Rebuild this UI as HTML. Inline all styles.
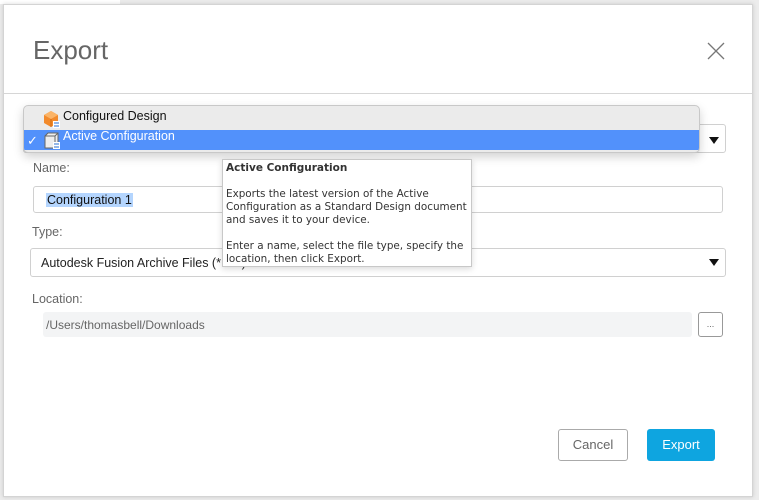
<!DOCTYPE html>
<html><head><meta charset="utf-8"><style>
*{box-sizing:border-box;margin:0;padding:0}
body{width:759px;height:500px;background:#ececec;font-family:"Liberation Sans",sans-serif;position:relative;overflow:hidden}
.dlg{position:absolute;left:3px;top:4px;width:750px;height:493px;background:#fff;border:1px solid #d4d4d4;box-shadow:0 0 4px rgba(0,0,0,.15)}
.abs{position:absolute}
.lbl{position:absolute;font-size:12.5px;color:#666}
.box{position:absolute;border:1px solid #d0d0d0;border-radius:3px;background:#fff}
.arrow{position:absolute;width:0;height:0;border-left:5px solid transparent;border-right:5px solid transparent;border-top:7px solid #111}
</style></head><body>
<div class="abs" style="left:0;top:0;width:120px;height:4px;background:#fff"></div>
<div class="dlg"></div>
<div class="abs" style="left:33px;top:35px;font-size:26px;color:#666">Export</div>
<svg class="abs" style="left:707px;top:42px" width="18" height="18"><path d="M1 1L17 17M17 1L1 17" stroke="#777" stroke-width="1.3"/></svg>
<div class="abs" style="left:4px;top:93px;width:748px;height:1px;background:#d6d6d6"></div>

<div class="box" style="left:23px;top:124px;width:703px;height:29px"></div>
<div class="arrow" style="left:709px;top:137px"></div>

<div class="lbl" style="left:33px;top:161px">Name:</div>
<div class="box" style="left:33px;top:186px;width:690px;height:27px"></div>
<div class="abs" style="left:46px;top:193px;font-size:12.5px;background:#b4d5fe;color:#111;padding:0 1px">Configuration 1</div>

<div class="lbl" style="left:32px;top:225px">Type:</div>
<div class="box" style="left:30px;top:248px;width:696px;height:29px"></div>
<div class="abs" style="left:41px;top:256px;font-size:12.5px;color:#222">Autodesk Fusion Archive Files (*.f3d)</div>
<div class="arrow" style="left:709px;top:259px"></div>

<div class="lbl" style="left:32px;top:292px">Location:</div>
<div class="abs" style="left:43px;top:312px;width:649px;height:25px;background:#f3f4f5;border-radius:3px"></div>
<div class="abs" style="left:46px;top:318px;font-size:12px;color:#666">/Users/thomasbell/Downloads</div>
<div class="box" style="left:698px;top:312px;width:25px;height:25px;border-color:#999;font-size:9px;color:#666;text-align:center;line-height:22px">...</div>

<div class="box" style="left:558px;top:429px;width:70px;height:32px;border-color:#aaa;font-size:13px;color:#666;text-align:center;line-height:30px">Cancel</div>
<div class="abs" style="left:647px;top:429px;width:68px;height:32px;background:#0ea5e0;border-radius:3px;font-size:13px;color:#fff;text-align:center;line-height:32px">Export</div>

<div class="abs" style="left:23px;top:105px;width:677px;height:48px;background:#ebebeb;border:1px solid #c8c8c8;border-radius:5px;box-shadow:0 4px 10px rgba(0,0,0,.18);overflow:hidden">
 <div class="abs" style="left:0;top:24px;width:677px;height:20px;background:#5291fb"></div>
 <svg class="abs" style="left:19px;top:4px" width="18" height="19"><path d="M1 5L8 1L15 5L15 13L8 17L1 13Z" fill="#f28a2c"/><path d="M1 5L8 9L15 5L8 1Z" fill="#fbb467"/><path d="M8 9L8 17" stroke="#d06a10"/><rect x="10" y="11" width="7" height="7" fill="#fff"/><path d="M11 13h5M11 16h5" stroke="#2a6fd0"/></svg>
 <div class="abs" style="left:39px;top:3px;font-size:12.5px;color:#111">Configured Design</div>
 <div class="abs" style="left:3px;top:27px;font-size:13px;color:#fff">✓</div>
 <svg class="abs" style="left:19px;top:25px" width="18" height="19"><path d="M2 5L5 2L15 2L15 14L12 17L2 17Z" fill="#eee" stroke="#666"/><path d="M2 5L12 5L15 2M12 5L12 17" stroke="#666" fill="none"/><rect x="10" y="11" width="7" height="7" fill="#fff"/><path d="M11 13h5M11 16h5" stroke="#2a6fd0"/></svg>
 <div class="abs" style="left:39px;top:23px;font-size:12.5px;color:#fff">Active Configuration</div>
</div>

<div class="abs" style="left:222px;top:159px;width:250px;height:108px;background:#fff;border:1px solid #c8c8c8;box-shadow:0 2px 6px rgba(0,0,0,.15);font-family:'DejaVu Sans',sans-serif;font-size:10.4px;color:#333;padding:2px 0 0 3px;line-height:13px;white-space:nowrap">
 <div style="font-weight:bold;font-size:10.5px">Active Configuration</div>
 <div style="margin-top:13px">Exports the latest version of the Active<br>Configuration as a Standard Design document<br>and saves it to your device.</div>
 <div style="margin-top:13px">Enter a name, select the file type, specify the<br>location, then click Export.</div>
</div>
</body></html>
